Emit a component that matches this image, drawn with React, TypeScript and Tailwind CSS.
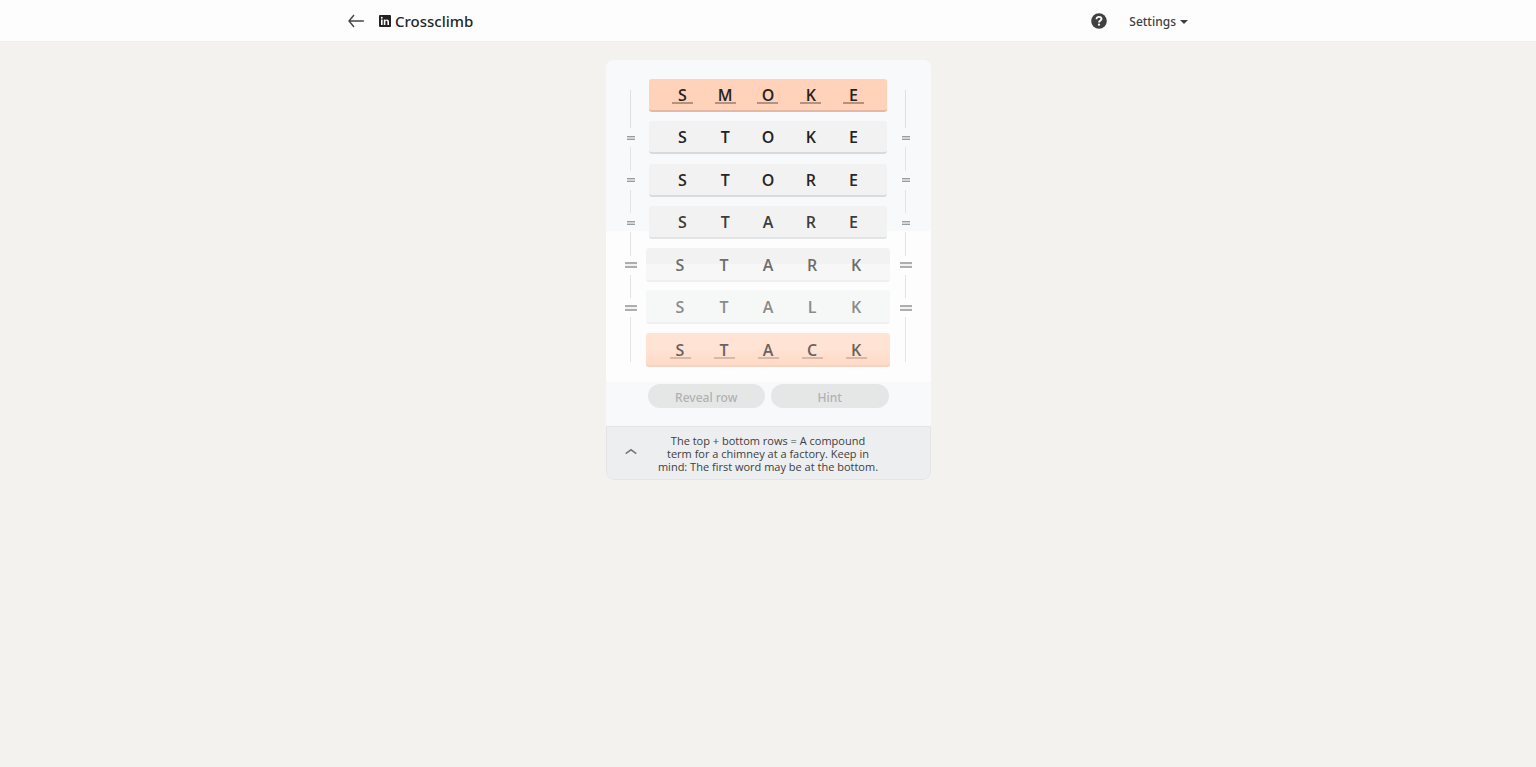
type Row = {
  word: string;
  size: string;
  tile: string;
  text: string;
  underline?: string;
};

const rows: Row[] = [
  {
    word: "SMOKE",
    size: "w-[238px] h-[33px] pt-[7px]",
    tile: "bg-[#ffd2b9] border-b-[#e4b8a3]",
    text: "text-[#262421]",
    underline: "bg-[#b5917f]",
  },
  {
    word: "STOKE",
    size: "w-[238px] h-[33px] pt-[7px]",
    tile: "bg-[#f2f2f2] border-b-[#d9dadc]",
    text: "text-[#222222]",
  },
  {
    word: "STORE",
    size: "w-[238px] h-[33px] pt-[7px]",
    tile: "bg-[#f2f2f2] border-b-[#d9dbdc]",
    text: "text-[#262626]",
  },
  {
    word: "STARE",
    size: "w-[238px] h-[33px] pt-[7px]",
    tile: "bg-[#f2f2f2] border-b-[#e2e5e5]",
    text: "text-[#3c3c3c]",
  },
  {
    word: "STARK",
    size: "w-[244px] h-[34px] pt-2",
    tile: "bg-linear-to-b from-[#f2f2f2] from-50% to-[#f6f7f6] to-50% border-b-[#eeefef]",
    text: "text-[#6d6d6d]",
  },
  {
    word: "STALK",
    size: "w-[244px] h-[34px] pt-2",
    tile: "bg-[#f6f8f7] border-b-[#eff1f0]",
    text: "text-[#8a8b8a]",
  },
  {
    word: "STACK",
    size: "w-[244px] h-[34px] pt-2",
    tile: "bg-linear-to-b from-[#ffe3d4] from-50% to-[#ffdac6] border-b-[#f5d2c0]",
    text: "text-[#686360]",
    underline: "bg-[#d6b9ab]",
  },
];

const joints = ["small", "small", "small", "large", "large"];

function Header() {
  return (
    <header className="h-[42px] border-b border-[#f0efec] bg-[#fdfdfd]">
      <div className="mx-auto flex h-full max-w-[840px] items-center">
        <button type="button" aria-label="Back" className="mr-[15px]">
          <svg width="16" height="14" viewBox="0 0 16 14" fill="none" stroke="#444" strokeWidth="1.4">
            <path d="M15.8 7H1M6 1L1 7l5 6" />
          </svg>
        </button>
        <svg width="12" height="12" viewBox="0 0 12 12" className="mr-1" aria-hidden="true">
          <rect width="12" height="12" rx="1" fill="#222" />
          <path
            d="M2 4.6h1.6V10H2zM2.8 1.8a.95.95 0 1 1 0 1.9.95.95 0 0 1 0-1.9zM4.8 4.6h1.5v.7c.3-.5.9-.85 1.7-.85C9.5 4.45 10 5.4 10 6.9V10H8.4V7.2c0-.8-.1-1.4-.9-1.4s-1.1.5-1.1 1.4V10H4.8z"
            fill="#fff"
          />
        </svg>
        <h1 className="text-[15px] leading-5 font-medium text-[#262626]">Crossclimb</h1>
        <button type="button" aria-label="How to play" className="ml-auto">
          <svg width="16" height="16" viewBox="0 0 16 16" fill="none">
            <circle cx="8" cy="8" r="7.8" fill="#404040" />
            <path
              d="M5.5 6.2C5.5 4.6 6.6 3.8 8 3.8s2.5.8 2.5 2.1c0 1.5-2.5 1.6-2.5 3.5"
              stroke="#fff"
              strokeWidth="1.8"
            />
            <circle cx="8" cy="11.7" r="1.1" fill="#fff" />
          </svg>
        </button>
        <button
          type="button"
          className="ml-[22px] flex items-center gap-1 pt-[3px] text-[12px] leading-4 font-medium text-[#404040]"
        >
          Settings
          <svg width="8" height="5" viewBox="0 0 8 5" aria-hidden="true">
            <path d="M0 0h8L4 4z" fill="#404040" />
          </svg>
        </button>
      </div>
    </header>
  );
}

function Rail() {
  return (
    <div className="mt-[11px] mb-[13px] flex w-3 flex-col items-center" aria-hidden="true">
      <div className="h-[38px] w-px bg-[#dedfe0]" />
      {joints.map((size, i) => (
        <div key={i} className={`flex flex-col items-center ${i < joints.length - 1 ? "flex-1" : ""}`}>
          <div className="flex h-[19px] items-center">
            {size === "small" ? (
              <div className="h-1 w-2 border-y border-[#9b9c9d] bg-[#d3d4d5]" />
            ) : (
              <div className="h-[6px] w-3 border-y-2 border-[#adaeb0] bg-[#f2f2f3]" />
            )}
          </div>
          {i < joints.length - 1 && <div className="w-px flex-1 bg-[#e2e3e3]" />}
        </div>
      ))}
      <div className="h-[45px] w-px bg-[#e4e4e4]" />
    </div>
  );
}

function WordRow({ row }: { row: Row }) {
  return (
    <li className={`flex rounded-[3px] border-b-2 px-3 ${row.size} ${row.tile}`}>
      {row.word.split("").map((letter, i) => (
        <span
          key={i}
          className={`flex flex-1 flex-col items-center font-['Open_Sans',sans-serif] text-[16px] leading-[18px] font-semibold ${row.text}`}
        >
          {letter}
          {row.underline && <span className={`-mt-[2px] h-[2px] w-[21px] ${row.underline}`} />}
        </span>
      ))}
    </li>
  );
}

function Board() {
  return (
    <section className="bg-linear-to-b from-[#f8f9fb] from-[171px] to-[#fdfdfd] to-[171px] pb-[7px]">
      <div className="flex justify-between px-[19px] pt-[19px]">
        <Rail />
        <ul className="grid h-[296px] grid-rows-7 justify-items-center">
          {rows.map((row) => (
            <WordRow key={row.word} row={row} />
          ))}
        </ul>
        <Rail />
      </div>
    </section>
  );
}

export default function App() {
  return (
    <div className="min-h-screen bg-[#f3f2ee] font-['Noto_Sans',sans-serif]">
      <Header />
      <main className="mx-auto mt-[18px] max-w-[325px] overflow-hidden rounded-lg bg-[#f8f9fb]">
        <Board />
        <div className="flex gap-[6px] px-[42px] pt-[2px] pb-[18px]">
          {["Reveal row", "Hint"].map((label) => (
            <button
              key={label}
              type="button"
              disabled
              className="h-6 flex-1 rounded-full bg-[#e5e7e7] pt-[3px] text-[12px] leading-4 font-medium text-[#b0b1b2]"
            >
              {label}
            </button>
          ))}
        </div>
        <footer className="flex h-[54px] items-center rounded-b-lg border border-[#e2e4e6] bg-[#eceef0] px-[18px]">
          <button type="button" aria-label="Previous clue">
            <svg width="12" height="12" viewBox="0 0 12 12" fill="none" stroke="#77797b" strokeWidth="1.5">
              <path d="M.7 6.7L6 2.8l5.3 3.9" />
            </svg>
          </button>
          <p className="flex-1 pr-3 text-center font-['Open_Sans',sans-serif] text-[11px] leading-[13px] text-[#404040]">
            The top + bottom rows = A compound
            <br />
            term for a chimney at a factory. Keep in
            <br />
            mind: The first word may be at the bottom.
          </p>
        </footer>
      </main>
    </div>
  );
}
